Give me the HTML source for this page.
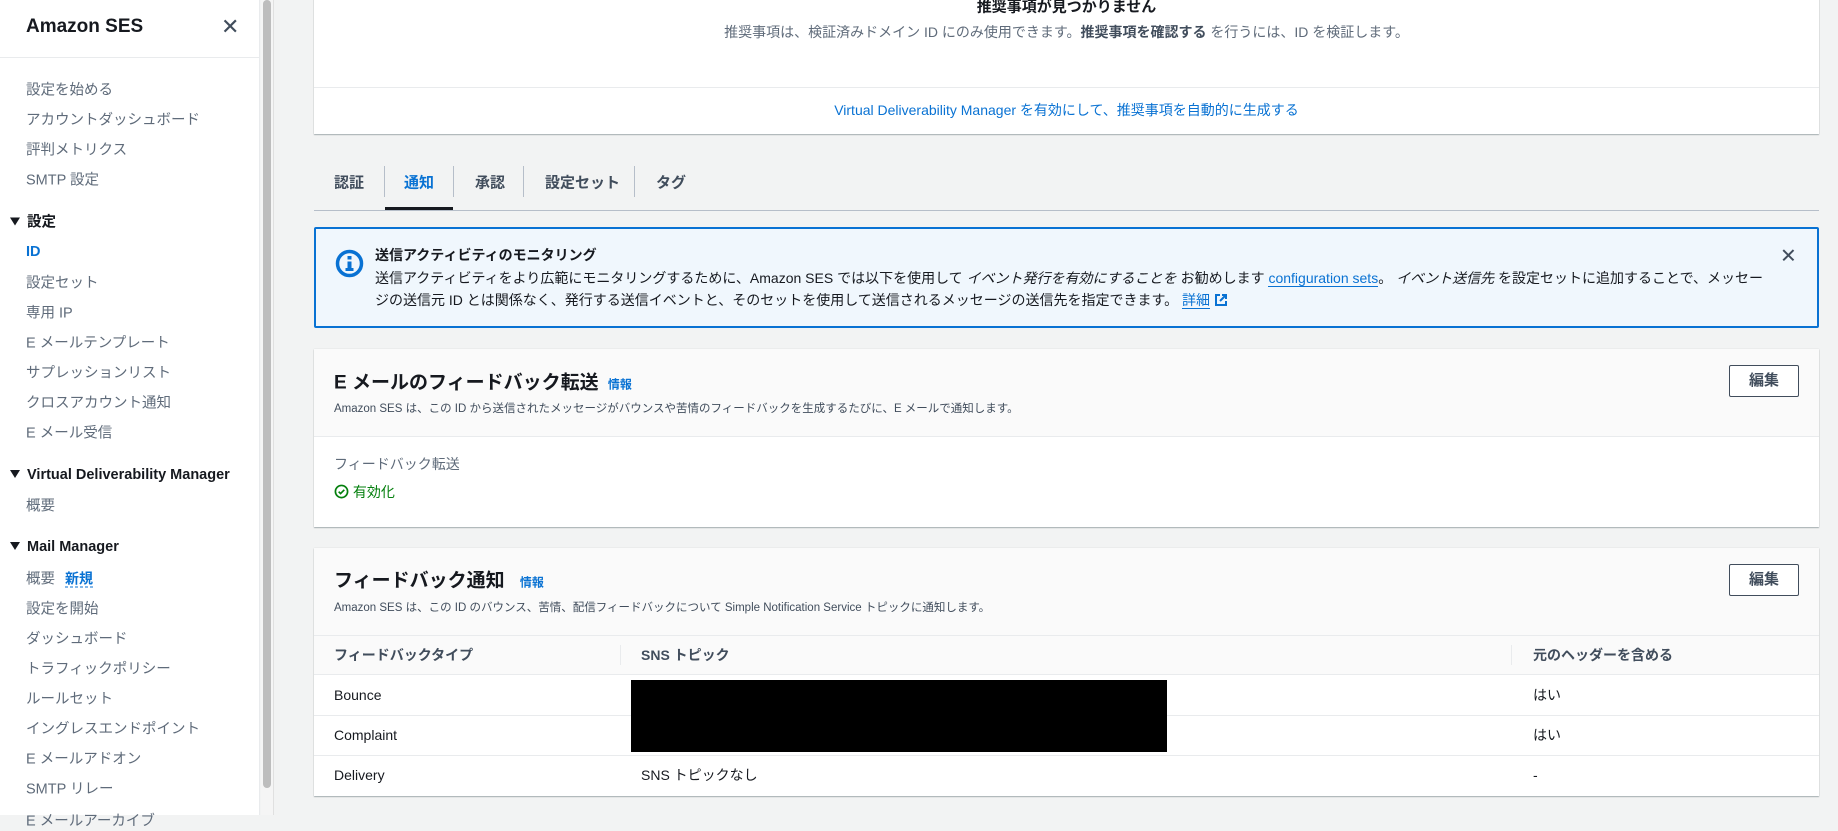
<!DOCTYPE html>
<html><head><meta charset="utf-8"><style>
*{margin:0;padding:0;box-sizing:border-box}
body{width:1838px;height:815px;overflow:hidden;background:#f2f3f3;font-family:"Liberation Sans","Noto Sans CJK JP",sans-serif;color:#16191f;position:relative}
.a{position:absolute;white-space:nowrap}
.sb{position:absolute;left:0;top:0;width:260px;height:815px;background:#fff;border-right:1px solid #e9ebed}
.si{position:absolute;left:26px;font-size:14.5px;color:#5f6b7a;transform:translateY(-50%)}
.sh{position:absolute;left:10px;font-size:14.5px;font-weight:bold;color:#16191f;transform:translateY(-50%)}
.sh:before{content:"";display:inline-block;border-left:5px solid transparent;border-right:5px solid transparent;border-top:8px solid #16191f;margin-right:7px;vertical-align:1px}
.card{position:absolute;left:314px;width:1505px;background:#fff;box-shadow:0 1px 1px rgba(0,28,36,.3),0 0 1px rgba(0,28,36,.15)}
.c{transform:translateY(-50%)}
.link{color:#0972d3}
.btn{position:absolute;left:1729px;width:70px;height:32px;border:1.5px solid #414d5c;border-radius:2px;font-size:15px;font-weight:bold;color:#414d5c;text-align:center;line-height:29px;background:#fff}
.hl{position:absolute;height:1px;background:#e9ebed}
</style></head><body>
<div class="sb">
<div class="a c" style="left:26px;top:27px;font-size:19px;font-weight:bold">Amazon SES</div>
<div class="a c" style="left:221px;top:27px;font-size:22px;color:#414d5c">✕</div>
<div class="hl" style="left:0;top:57px;width:259px"></div>
<div class="si" style="top:89px">設定を始める</div>
<div class="si" style="top:119px">アカウントダッシュボード</div>
<div class="si" style="top:149px">評判メトリクス</div>
<div class="si" style="top:179px">SMTP 設定</div>
<div class="sh" style="top:221px">設定</div>
<div class="si" style="top:252px;color:#0972d3;font-weight:bold">ID</div>
<div class="si" style="top:282px">設定セット</div>
<div class="si" style="top:312px">専用 IP</div>
<div class="si" style="top:342px">E メールテンプレート</div>
<div class="si" style="top:372px">サプレッションリスト</div>
<div class="si" style="top:402px">クロスアカウント通知</div>
<div class="si" style="top:432px">E メール受信</div>
<div class="sh" style="top:475px">Virtual Deliverability Manager</div>
<div class="si" style="top:505px">概要</div>
<div class="sh" style="top:547px">Mail Manager</div>
<div class="si" style="top:578px">概要 <span style="color:#0972d3;font-weight:bold;font-size:14px;border-bottom:1px dashed #0972d3;margin-left:6px">新規</span></div>
<div class="si" style="top:608px">設定を開始</div>
<div class="si" style="top:638px">ダッシュボード</div>
<div class="si" style="top:668px">トラフィックポリシー</div>
<div class="si" style="top:698px">ルールセット</div>
<div class="si" style="top:728px">イングレスエンドポイント</div>
<div class="si" style="top:758px">E メールアドオン</div>
<div class="si" style="top:788px">SMTP リレー</div>
<div class="si" style="top:820px">E メールアーカイブ</div>
</div>
<div style="position:absolute;left:261px;top:0;width:13px;height:815px;background:#f5f5f5;border-right:1px solid #e0e0e0"></div>
<div style="position:absolute;left:263px;top:0;width:8px;height:788px;background:#bdbdbd;border-radius:4px"></div>

<div class="card" style="top:-4px;height:138px">
<div class="a c" style="left:0;width:1505px;text-align:center;top:10px;font-size:15px;font-weight:bold">推奨事項が見つかりません</div>
<div class="a c" style="left:0;width:1505px;text-align:center;top:36px;font-size:14px;color:#5f6b7a">推奨事項は、検証済みドメイン ID にのみ使用できます。<b style="color:#414d5c">推奨事項を確認する</b> を行うには、ID を検証します。</div>
<div class="hl" style="left:0;top:91px;width:1505px"></div>
<div class="a c link" style="left:0;width:1505px;text-align:center;top:114px;font-size:14px">Virtual Deliverability Manager を有効にして、推奨事項を自動的に生成する</div>
</div>

<div style="position:absolute;left:314px;top:210px;width:1505px;height:1px;background:#b6bec9"></div>
<div class="a c" style="left:334px;top:182px;font-size:15px;font-weight:bold;color:#414d5c">認証</div>
<div class="a c" style="left:404px;top:182px;font-size:15px;font-weight:bold;color:#0972d3">通知</div>
<div class="a c" style="left:475px;top:182px;font-size:15px;font-weight:bold;color:#414d5c">承認</div>
<div class="a c" style="left:545px;top:182px;font-size:15px;font-weight:bold;color:#414d5c">設定セット</div>
<div class="a c" style="left:656px;top:182px;font-size:15px;font-weight:bold;color:#414d5c">タグ</div>
<div style="position:absolute;left:384px;top:166px;width:1px;height:31px;background:#b6bec9"></div>
<div style="position:absolute;left:453px;top:166px;width:1px;height:31px;background:#b6bec9"></div>
<div style="position:absolute;left:523px;top:166px;width:1px;height:31px;background:#b6bec9"></div>
<div style="position:absolute;left:634px;top:166px;width:1px;height:31px;background:#b6bec9"></div>
<div style="position:absolute;left:385px;top:207px;width:68px;height:3px;background:#16191f"></div>

<div style="position:absolute;left:314px;top:227px;width:1505px;height:101px;background:#f0f7fd;border:2px solid #0972d3;border-radius:2px"></div>
<svg class="a" style="left:335px;top:249px" width="29" height="29" viewBox="0 0 29 29"><circle cx="14.5" cy="14.5" r="12" fill="none" stroke="#0972d3" stroke-width="3.5"/><rect x="12.5" y="12.5" width="4" height="9" fill="#0972d3"/><rect x="10.5" y="19" width="8" height="3" fill="#0972d3"/><rect x="12.5" y="7" width="4" height="3.5" fill="#0972d3"/></svg>
<div class="a c" style="left:375px;top:255px;font-size:14px;font-weight:bold">送信アクティビティのモニタリング</div>
<div class="a c" style="left:375px;top:278px;font-size:14px">送信アクティビティをより広範にモニタリングするために、Amazon SES では以下を使用して <i>イベント発行を有効にすることを</i> お勧めします <span class="link" style="border-bottom:1px solid #0972d3">configuration sets</span>。 <i>イベント送信先</i> を設定セットに追加することで、メッセー</div>
<div class="a c" style="left:375px;top:300px;font-size:14px">ジの送信元 ID とは関係なく、発行する送信イベントと、そのセットを使用して送信されるメッセージの送信先を指定できます。 <span class="link" style="border-bottom:1px solid #0972d3">詳細</span> <svg width="14" height="14" viewBox="0 0 14 14" style="vertical-align:-2px"><path d="M6 2H2v10h10V8M8 2h4v4M12 2L6 8" fill="none" stroke="#0972d3" stroke-width="2"/></svg></div>
<div class="a c" style="left:1780px;top:256px;font-size:20px;color:#414d5c">✕</div>

<div class="card" style="top:349px;height:178px">
<div style="position:absolute;left:0;top:0;width:1505px;height:88px;background:#fafafa;border-bottom:1px solid #e9ebed"></div>
<div class="a c" style="left:20px;top:32px;font-size:19px;font-weight:bold">E メールのフィードバック転送 <span class="link" style="font-size:12px;margin-left:4px">情報</span></div>
<div class="a c" style="left:20px;top:59px;font-size:11.5px;color:#414d5c">Amazon SES は、この ID から送信されたメッセージがバウンスや苦情のフィードバックを生成するたびに、E メールで通知します。</div>
<div class="a c" style="left:20px;top:115px;font-size:14px;color:#5f6b7a">フィードバック転送</div>
<div class="a c" style="left:20px;top:143px;font-size:14px;color:#037f0c"><svg width="15" height="15" viewBox="0 0 16 16" style="vertical-align:-2px"><circle cx="8" cy="8" r="6.5" fill="none" stroke="#037f0c" stroke-width="1.8"/><path d="M5 8.2l2 2 4-4" fill="none" stroke="#037f0c" stroke-width="1.8"/></svg> 有効化</div>
</div>
<div class="btn" style="top:365px">編集</div>

<div class="card" style="top:548px;height:248px">
<div style="position:absolute;left:0;top:0;width:1505px;height:127px;background:#fafafa;border-bottom:1px solid #e9ebed"></div>
<div class="hl" style="left:0;top:87px;width:1505px"></div>
<div class="a c" style="left:20px;top:31px;font-size:19px;font-weight:bold">フィードバック通知 <span class="link" style="font-size:12px;margin-left:10px">情報</span></div>
<div class="a c" style="left:20px;top:59px;font-size:11.5px;color:#414d5c">Amazon SES は、この ID のバウンス、苦情、配信フィードバックについて Simple Notification Service トピックに通知します。</div>
<div class="a c" style="left:20px;top:107px;font-size:14px;font-weight:bold;color:#414d5c">フィードバックタイプ</div>
<div style="position:absolute;left:306px;top:97px;width:1px;height:20px;background:#e9ebed"></div>
<div class="a c" style="left:327px;top:107px;font-size:14px;font-weight:bold;color:#414d5c">SNS トピック</div>
<div style="position:absolute;left:1197px;top:97px;width:1px;height:20px;background:#e9ebed"></div>
<div class="a c" style="left:1219px;top:107px;font-size:14px;font-weight:bold;color:#414d5c">元のヘッダーを含める</div>
<div class="hl" style="left:0;top:167px;width:1505px"></div>
<div class="hl" style="left:0;top:207px;width:1505px"></div>
<div class="a c" style="left:20px;top:147px;font-size:14px">Bounce</div>
<div class="a c" style="left:1219px;top:147px;font-size:14px">はい</div>
<div class="a c" style="left:20px;top:187px;font-size:14px">Complaint</div>
<div class="a c" style="left:1219px;top:187px;font-size:14px">はい</div>
<div class="a c" style="left:20px;top:227px;font-size:14px">Delivery</div>
<div class="a c" style="left:327px;top:227px;font-size:14px">SNS トピックなし</div>
<div class="a c" style="left:1219px;top:227px;font-size:14px">-</div>
<div style="position:absolute;left:317px;top:132px;width:536px;height:72px;background:#000"></div>
</div>
<div class="btn" style="top:564px">編集</div>
</body></html>
